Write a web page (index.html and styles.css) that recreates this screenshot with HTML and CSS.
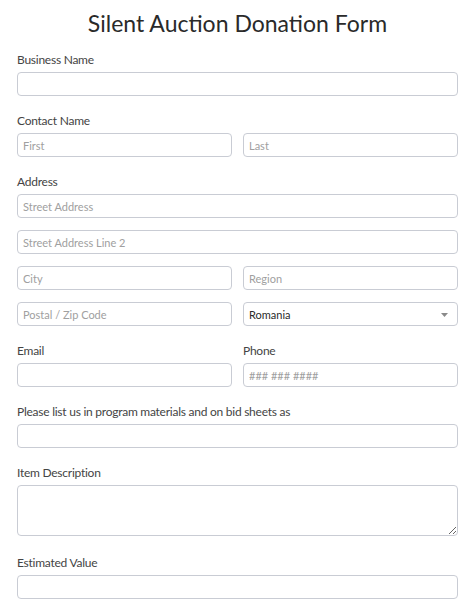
FILE: index.html
```html
<!DOCTYPE html>
<html lang="en">
<head>
<meta charset="utf-8">
<title>Silent Auction Donation Form</title>
<link rel="stylesheet" href="styles.css">
</head>
<body>
<form class="form">
  <h1 class="title">Silent Auction Donation Form</h1>

  <div class="field">
    <label class="label">Business Name</label>
    <input class="input" type="text">
  </div>

  <div class="field">
    <label class="label">Contact Name</label>
    <div class="row">
      <input class="input" type="text" placeholder="First">
      <input class="input" type="text" placeholder="Last">
    </div>
  </div>

  <div class="field">
    <label class="label">Address</label>
    <div class="stack">
      <input class="input" type="text" placeholder="Street Address">
      <input class="input" type="text" placeholder="Street Address Line 2">
      <div class="row">
        <input class="input" type="text" placeholder="City">
        <input class="input" type="text" placeholder="Region">
      </div>
      <div class="row">
        <input class="input" type="text" placeholder="Postal / Zip Code">
        <div class="select-wrap">
          <select class="input select">
            <option>Romania</option>
          </select>
          <svg class="caret" width="7" height="4" viewBox="0 0 7 4"><path d="M0 0H7L3.5 4Z" fill="#8a8a8a"/></svg>
        </div>
      </div>
    </div>
  </div>

  <div class="row field">
    <div>
      <label class="label">Email</label>
      <input class="input" type="text">
    </div>
    <div>
      <label class="label">Phone</label>
      <input class="input" type="text" placeholder="### ### ####">
    </div>
  </div>

  <div class="field">
    <label class="label">Please list us in program materials and on bid sheets as</label>
    <input class="input" type="text">
  </div>

  <div class="field field-tall">
    <label class="label">Item Description</label>
    <textarea class="input textarea"></textarea>
  </div>

  <div class="field">
    <label class="label">Estimated Value</label>
    <input class="input" type="text">
  </div>
</form>
</body>
</html>
```

FILE: styles.css
```css
* {
  box-sizing: border-box;
}

html, body {
  margin: 0;
  background: #ffffff;
}

body {
  font-family: Lato, "Open Sans", Arial, sans-serif;
  color: #333333;
}

.form {
  padding: 8px 16px 0 17px;
}

.title {
  margin: 0 0 13px;
  font-size: 23px;
  line-height: 30px;
  font-weight: 400;
  color: #2a2a2a;
  text-align: center;
}

.field {
  margin-bottom: 16px;
}

.field-tall {
  margin-bottom: 18px;
}

.label {
  display: block;
  font-size: 12px;
  line-height: 17px;
  letter-spacing: -0.25px;
  color: #444444;
  margin-bottom: 4px;
}

.row {
  display: grid;
  grid-template-columns: 1fr 1fr;
  column-gap: 11px;
}

.stack {
  display: flex;
  flex-direction: column;
  gap: 12px;
}

.input {
  display: block;
  width: 100%;
  height: 24px;
  margin: 0;
  padding: 0 5px;
  border: 1px solid #c9ccd4;
  border-radius: 4px;
  background: #ffffff;
  font-family: Lato, "Open Sans", Arial, sans-serif;
  font-size: 11px;
  color: #333333;
  outline: none;
}

.input::placeholder {
  color: #a0a0a0;
}

.select-wrap {
  position: relative;
}

.select {
  appearance: none;
  -webkit-appearance: none;
  color: #2a2a2a;
}

.caret {
  position: absolute;
  right: 10px;
  top: 11px;
  pointer-events: none;
}

.textarea {
  height: 51px;
  padding: 4px 5px;
  resize: vertical;
}
```
